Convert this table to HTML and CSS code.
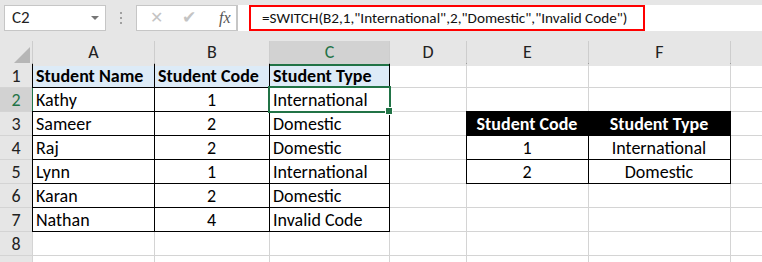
FILE: index.html
```html
<!DOCTYPE html>
<html lang="en">
<head>
    <meta charset="UTF-8">
    <title>SWITCH example</title>
    <link rel="stylesheet" href="styles.css">
</head>
<body>
    <div class="formula-bar">
        <div class="namebox">C2<span class="drop"></span></div>
        <div class="dots"><span></span><span></span><span></span></div>
        <div class="fxbox">
            <span class="btn off x">&#x2715;</span>
            <span class="btn off ok">&#x2714;</span>
            <span class="btn fx">fx</span>
        </div>
        <div class="formula">
            <span class="mark">=SWITCH(B2,1,"International",2,"Domestic","Invalid Code")</span>
        </div>
    </div>

    <div class="col-heads">
        <div class="corner"></div>
        <div>A</div><div>B</div><div class="on">C</div><div>D</div><div>E</div><div>F</div><div></div>
    </div>

    <div class="sheet">
        <div class="rn">1</div>
        <div class="t th">Student Name</div><div class="t th">Student Code</div><div class="t th">Student Type</div>
        <div></div><div></div><div></div><div></div>

        <div class="rn on">2</div>
        <div class="t">Kathy</div><div class="t mid">1</div><div class="t sel">International</div>
        <div></div><div></div><div></div><div></div>

        <div class="rn">3</div>
        <div class="t">Sameer</div><div class="t mid">2</div><div class="t">Domestic</div>
        <div></div><div class="t dk">Student Code</div><div class="t dk">Student Type</div><div></div>

        <div class="rn">4</div>
        <div class="t">Raj</div><div class="t mid">2</div><div class="t">Domestic</div>
        <div></div><div class="t mid">1</div><div class="t mid">International</div><div></div>

        <div class="rn">5</div>
        <div class="t">Lynn</div><div class="t mid">1</div><div class="t">International</div>
        <div></div><div class="t mid">2</div><div class="t mid">Domestic</div><div></div>

        <div class="rn">6</div>
        <div class="t">Karan</div><div class="t mid">2</div><div class="t">Domestic</div>
        <div></div><div></div><div></div><div></div>

        <div class="rn">7</div>
        <div class="t">Nathan</div><div class="t mid">4</div><div class="t">Invalid Code</div>
        <div></div><div></div><div></div><div></div>

        <div class="rn">8</div>
        <div></div><div></div><div></div><div></div><div></div><div></div><div></div>

        <div class="rn"></div>
        <div></div><div></div><div></div><div></div><div></div><div></div><div></div>
    </div>
</body>
</html>
```

FILE: styles.css
```css
* { box-sizing: border-box; }
body { margin: 0; background: #fff; font-family: Carlito, Calibri, Lato, "Noto Sans", sans-serif; font-size: 18px; color: #000; overflow: hidden; }

/* formula bar */
.formula-bar { display: flex; align-items: flex-start; height: 41px; padding-top: 5px; background: #e6e6e6; }
.namebox { position: relative; margin-left: 4px; width: 102px; height: 26px; border: 1px solid #c6c6c6; background: #fff; padding-left: 7px; line-height: 24px; font-size: 17px; color: #222; }
.drop { position: absolute; right: 6px; top: 10px; border-left: 4px solid transparent; border-right: 4px solid transparent; border-top: 4px solid #767676; }
.dots { width: 30px; height: 26px; display: flex; flex-direction: column; align-items: center; justify-content: center; gap: 3px; }
.dots span { width: 2px; height: 2px; background: #a0a0a0; }
.fxbox { width: 101px; height: 26px; border: 1px solid #c6c6c6; background: #fff; display: flex; align-items: center; padding-left: 13px; }
.btn { line-height: 24px; }
.btn.off { color: #c4c4c4; }
.btn.x { font-size: 16px; }
.btn.ok { font-size: 17px; margin-left: 19px; }
.btn.fx { margin-left: 23px; font-family: "Liberation Serif", serif; font-style: italic; font-size: 16px; color: #555; }
.formula { flex: 1; height: 26px; border-left: 1px solid #c6c6c6; background: #fff; padding-left: 11px; }
.mark { display: inline-block; width: 396px; height: 26px; border: 2px solid #ff0000; padding-left: 11px; line-height: 22px; font-size: 15.2px; color: #111; }

/* column headers */
.col-heads { position: relative; z-index: 1; display: grid; grid-template-columns: 32px 121px 114px 119px 76px 121px 141px 1fr; column-gap: 1px; height: 23px; background: #cdcdcd; border-bottom: 1px solid #9e9e9e; }
.col-heads div { background: #e6e6e6; text-align: center; line-height: 23px; font-size: 18px; color: #222; }
.col-heads .on { background: #d2d2d2; color: #217346; border-bottom: 2px solid #217346; }
.corner { position: relative; }
.corner::after { content: ""; position: absolute; right: 2px; bottom: 3px; border-left: 16px solid transparent; border-bottom: 16px solid #b6b6b6; }

/* cells */
.sheet { display: grid; grid-template-columns: 32px 121px 114px 119px 76px 121px 141px 1fr; grid-auto-rows: 23px; gap: 1px; background: #d4d4d4; }
.sheet div { background: #fff; padding: 0 4px 0 3px; line-height: 24px; white-space: nowrap; }
.sheet .rn { background: #e6e6e6; text-align: center; padding: 0; font-size: 18px; color: #222; }
.sheet .rn.on { position: relative; z-index: 1; background: #d2d2d2; color: #217346; box-shadow: 1px 0 0 #217346; }
.sheet .t { box-shadow: 0 0 0 1px #000; }
.sheet .th { background: #ddebf7; font-weight: bold; }
.sheet .mid { text-align: center; }
.sheet .dk { background: #000; color: #fff; font-weight: bold; text-align: center; }
.sheet .sel { position: relative; z-index: 2; outline: 2px solid #217346; }
.sheet .sel::after { content: ""; position: absolute; right: -4px; bottom: -4px; width: 6px; height: 6px; background: #217346; border: 1px solid #fff; }
```
